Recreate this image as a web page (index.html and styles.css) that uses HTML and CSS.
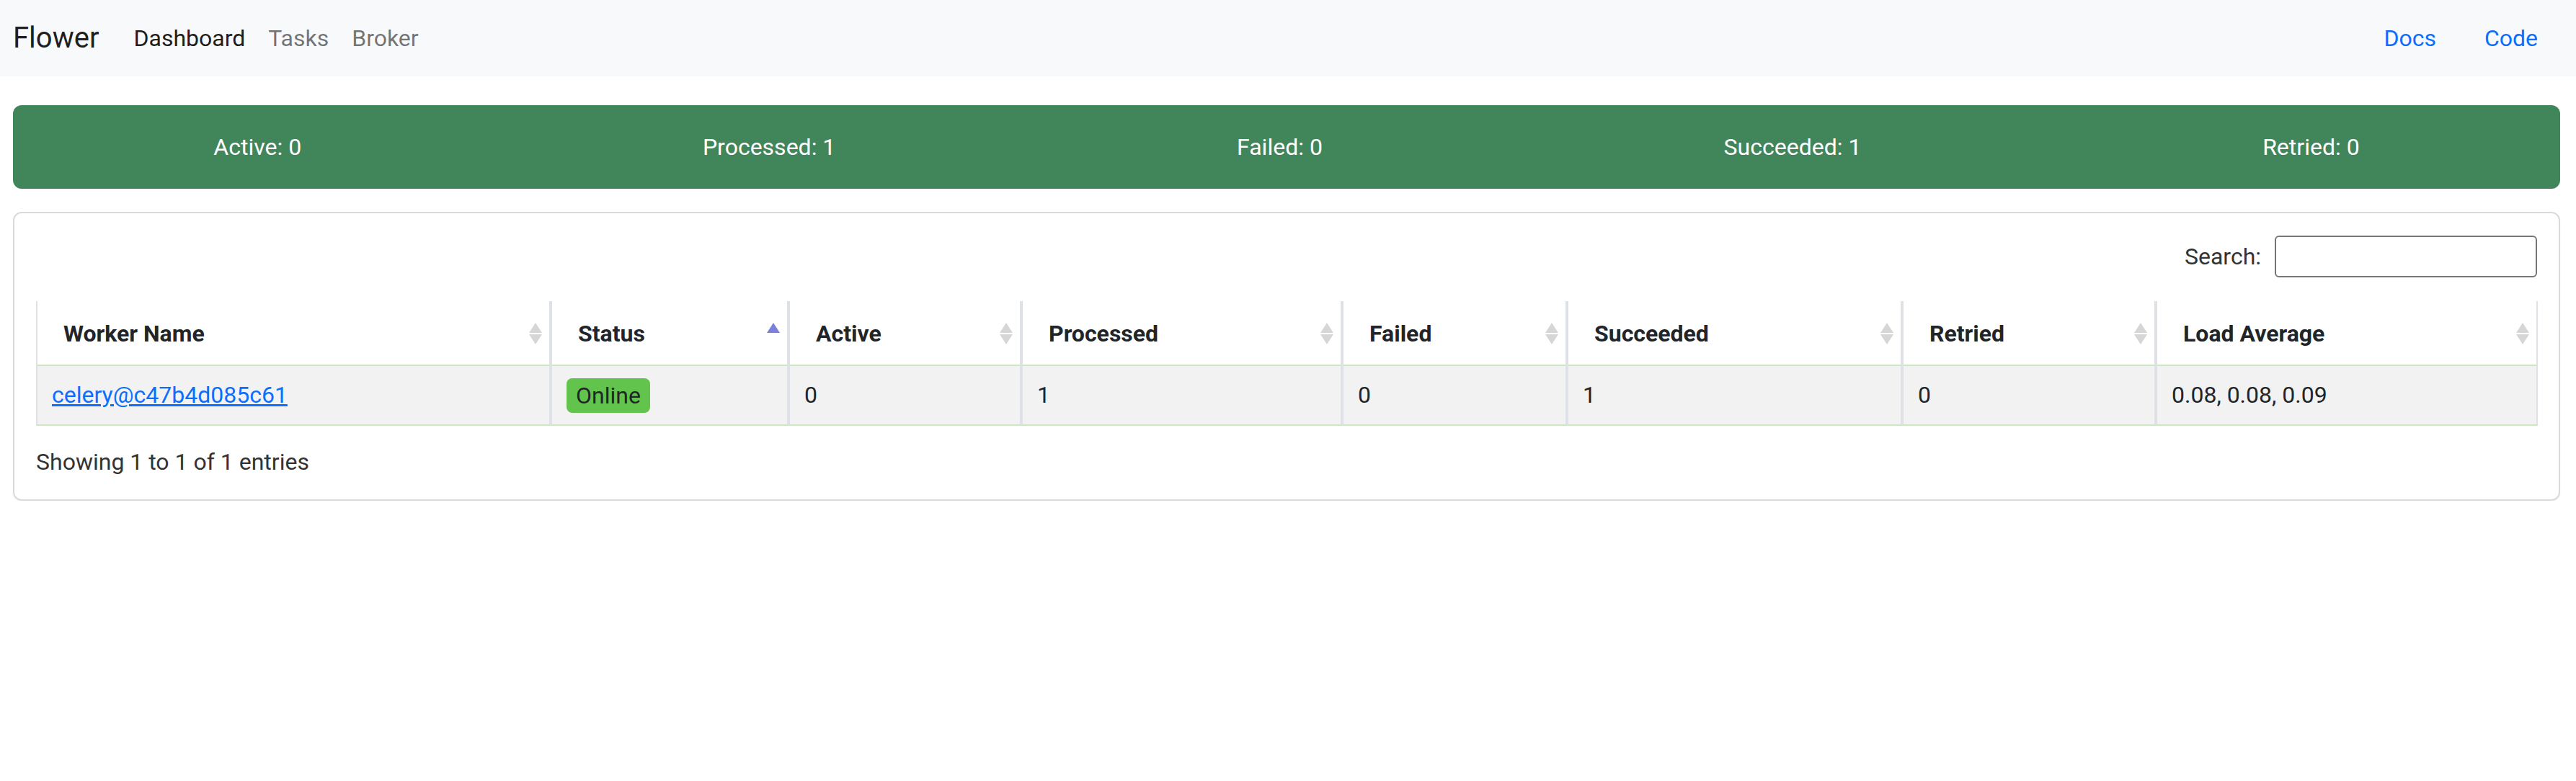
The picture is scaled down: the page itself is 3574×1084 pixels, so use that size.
FILE: index.html
```html
<!DOCTYPE html>
<html lang="en">
<head>
<meta charset="utf-8">
<title>Flower</title>
<link rel="stylesheet" href="styles.css">
</head>
<body>
<nav class="navbar">
  <a class="brand" href="#">Flower</a>
  <ul class="nav">
    <li><a class="nav-link active" href="#">Dashboard</a></li>
    <li><a class="nav-link" href="#">Tasks</a></li>
    <li><a class="nav-link" href="#">Broker</a></li>
  </ul>
  <ul class="nav nav-right">
    <li><a class="nav-link ext" href="#">Docs</a></li>
    <li><a class="nav-link ext" href="#">Code</a></li>
  </ul>
</nav>

<main class="container">
  <section class="stats">
    <div class="stat">Active: 0</div>
    <div class="stat">Processed: 1</div>
    <div class="stat">Failed: 0</div>
    <div class="stat">Succeeded: 1</div>
    <div class="stat">Retried: 0</div>
  </section>

  <section class="card">
    <div class="search-row">
      <label class="search-label">Search:<input class="search-input" type="search"></label>
    </div>
    <table class="workers">
      <colgroup>
        <col class="w-name"><col class="w-status"><col class="w-active"><col class="w-processed">
        <col class="w-failed"><col class="w-succeeded"><col class="w-retried"><col class="w-load">
      </colgroup>
      <thead>
        <tr>
          <th><div class="th-inner"><span>Worker Name</span><span class="sort"><i class="up"></i><i class="down"></i></span></div></th>
          <th><div class="th-inner"><span>Status</span><span class="sort asc"><i class="up"></i><i class="down"></i></span></div></th>
          <th><div class="th-inner"><span>Active</span><span class="sort"><i class="up"></i><i class="down"></i></span></div></th>
          <th><div class="th-inner"><span>Processed</span><span class="sort"><i class="up"></i><i class="down"></i></span></div></th>
          <th><div class="th-inner"><span>Failed</span><span class="sort"><i class="up"></i><i class="down"></i></span></div></th>
          <th><div class="th-inner"><span>Succeeded</span><span class="sort"><i class="up"></i><i class="down"></i></span></div></th>
          <th><div class="th-inner"><span>Retried</span><span class="sort"><i class="up"></i><i class="down"></i></span></div></th>
          <th><div class="th-inner"><span>Load Average</span><span class="sort"><i class="up"></i><i class="down"></i></span></div></th>
        </tr>
      </thead>
      <tbody>
        <tr>
          <td><a class="worker-link" href="#">celery@c47b4d085c61</a></td>
          <td><span class="badge">Online</span></td>
          <td>0</td>
          <td>1</td>
          <td>0</td>
          <td>1</td>
          <td>0</td>
          <td>0.08, 0.08, 0.09</td>
        </tr>
      </tbody>
    </table>
    <div class="info">Showing 1 to 1 of 1 entries</div>
  </section>
</main>
</body>
</html>
```
FILE: styles.css
```css
* { box-sizing: border-box; }

html, body {
  margin: 0;
  padding: 0;
  background: #ffffff;
}

body {
  font-family: Roboto, "Liberation Sans", Arial, sans-serif;
  font-size: 32px;
  line-height: 48px;
  color: #212529;
}

a { text-decoration: none; }

/* Navbar */
.navbar {
  display: flex;
  align-items: center;
  height: 106px;
  padding: 0 37px 0 18px;
  background: #f8f9fa;
}

.brand {
  font-size: 40px;
  line-height: 60px;
  color: rgba(0, 0, 0, 0.9);
  margin-right: 32px;
}

.nav {
  display: flex;
  list-style: none;
  margin: 0;
  padding: 0;
}

.nav-link {
  display: block;
  padding: 0 16px;
  color: rgba(0, 0, 0, 0.55);
}

.nav-link.active { color: rgba(0, 0, 0, 0.9); }

.nav-right {
  margin-left: auto;
  gap: 35px;
}

.nav-link.ext { color: #0d6efd; }

/* Main */
.container {
  padding: 0 22px 0 18px;
}

.stats {
  margin-top: 40px;
  height: 116px;
  background: #41865a;
  border-radius: 12px;
  color: #ffffff;
  display: flex;
  align-items: center;
}

.stat {
  flex: 1 1 auto;
  text-align: center;
}

.card {
  margin-top: 32px;
  border: 2px solid #dadada;
  border-radius: 12px;
  padding: 31px 30px 28px;
  box-shadow: 0 1px 2px rgba(0, 0, 0, 0.06);
}

.search-row {
  display: flex;
  justify-content: flex-end;
}

.search-label {
  display: flex;
  align-items: center;
  gap: 19px;
  color: #333333;
}

.search-input {
  width: 364px;
  height: 58px;
  border: 2px solid #767676;
  border-radius: 6px;
  background: #ffffff;
  font: inherit;
  margin: 0;
  padding: 0 8px;
}

/* Table */
.workers {
  margin-top: 33px;
  width: 100%;
  table-layout: fixed;
  border-collapse: separate;
  border-spacing: 0;
}

.w-name { width: 714px; }
.w-status { width: 330px; }
.w-active { width: 323px; }
.w-processed { width: 445px; }
.w-failed { width: 312px; }
.w-succeeded { width: 465px; }
.w-retried { width: 352px; }
.w-load { width: 530px; }

.workers th,
.workers td {
  border-left: 2px solid #dee2e6;
  border-right: 2px solid #dee2e6;
  text-align: left;
  white-space: nowrap;
}

.workers th {
  padding: 21px 10px 19px 36px;
  font-weight: 700;
  border-bottom: 2px solid #cde8c0;
  background: #ffffff;
}

.th-inner {
  display: flex;
  align-items: center;
  justify-content: space-between;
}

.sort {
  display: flex;
  flex-direction: column;
  gap: 2px;
}

.sort i {
  display: block;
  width: 0;
  height: 0;
  border-left: 9px solid transparent;
  border-right: 9px solid transparent;
}

.sort .up { border-bottom: 14px solid #d6d6d6; }
.sort .down { border-top: 14px solid #d6d6d6; }
.sort.asc .up { border-bottom-color: #7b80db; }
.sort.asc .down { border-top-color: transparent; }

.workers td {
  padding: 16px 20px;
  background: #f2f2f2;
  border-bottom: 2px solid #cde8c0;
  vertical-align: top;
}

.worker-link {
  color: #0d6efd;
  text-decoration: underline;
}

.badge {
  display: inline-block;
  vertical-align: top;
  margin-top: 1px;
  height: 48px;
  line-height: 48px;
  padding: 0 13px;
  border-radius: 8px;
  background: #62c44c;
  color: #212529;
}

.info {
  padding-top: 26px;
  color: #333333;
}
```
